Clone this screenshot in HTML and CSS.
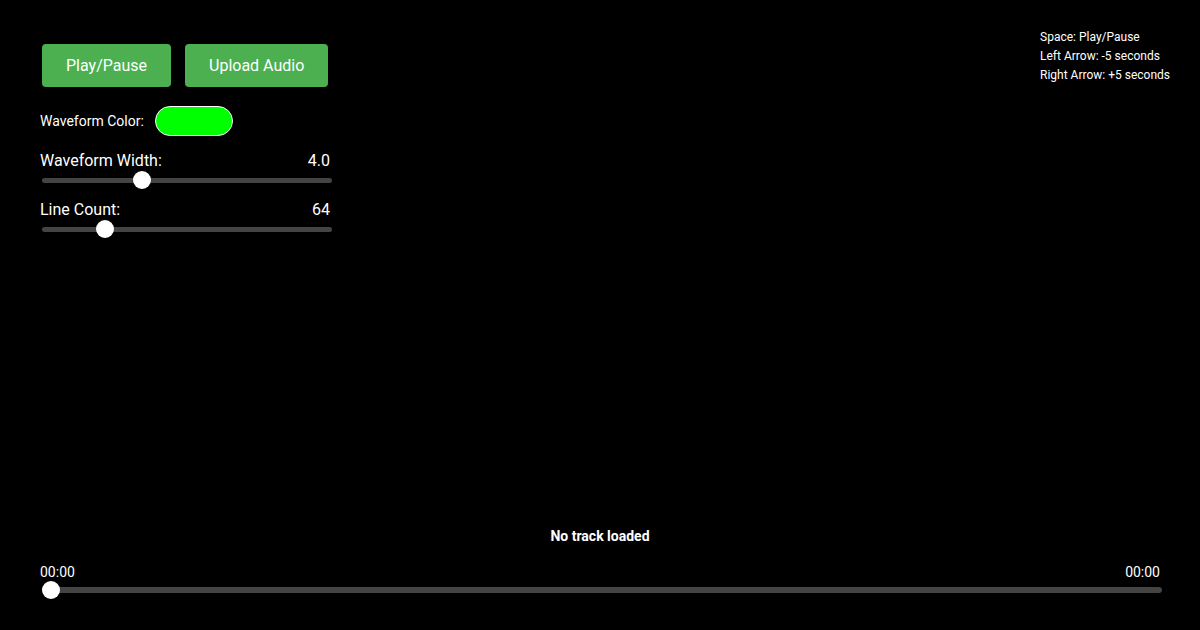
FILE: index.html
```html
<!DOCTYPE html>
<html lang="en">
<head>
<meta charset="utf-8">
<title>Waveform Player</title>
<link rel="stylesheet" href="styles.css">
</head>
<body>
<div class="page">
  <div class="top">
    <div class="panel">
      <div class="buttons">
        <button class="btn">Play/Pause</button>
        <button class="btn">Upload Audio</button>
      </div>
      <div class="color-row">
        <span class="small-label">Waveform Color:</span>
        <span class="swatch"></span>
      </div>
      <div class="control">
        <div class="control-head"><span>Waveform Width:</span><span>4.0</span></div>
        <input class="range" type="range" min="1" max="10" step="0.1" value="4">
      </div>
      <div class="control second">
        <div class="control-head"><span>Line Count:</span><span>64</span></div>
        <input class="range" type="range" min="16" max="256" step="1" value="64">
      </div>
    </div>
    <div class="shortcuts">
      <div>Space: Play/Pause</div>
      <div>Left Arrow: -5 seconds</div>
      <div>Right Arrow: +5 seconds</div>
    </div>
  </div>
  <div class="footer">
    <div class="track">No track loaded</div>
    <div class="times"><span>00:00</span><span>00:00</span></div>
    <input class="range progress" type="range" min="0" max="100" value="0">
  </div>
</div>
</body>
</html>
```
FILE: styles.css
```css
html, body {
  margin: 0;
  padding: 0;
  background: #000;
}
body {
  font-family: Roboto, "Liberation Sans", sans-serif;
  color: #fff;
}
.page {
  height: 630px;
  display: flex;
  flex-direction: column;
  box-sizing: border-box;
}
.top {
  display: flex;
  justify-content: space-between;
  align-items: flex-start;
  padding: 0 30px 0 40px;
}
.panel {
  width: 290px;
  padding-top: 44px;
}
.buttons {
  display: flex;
  gap: 14px;
  margin-left: 2px;
}
.btn {
  background: #4caf50;
  color: #fff;
  border: none;
  border-radius: 4px;
  padding: 12px 24px;
  font-family: inherit;
  font-size: 16px;
  line-height: 19px;
  margin: 0;
}
.color-row {
  display: flex;
  align-items: center;
  gap: 11px;
  margin-top: 19px;
  height: 30px;
}
.small-label {
  font-size: 14px;
}
.swatch {
  display: block;
  width: 78px;
  height: 30px;
  box-sizing: border-box;
  border: 1.5px solid #fff;
  border-radius: 15px;
  background: #00ff00;
}
.control {
  margin-top: 15px;
}
.control.second {
  margin-top: 11px;
}
.control-head {
  display: flex;
  justify-content: space-between;
  font-size: 16px;
  line-height: 19px;
}
.range {
  -webkit-appearance: none;
  appearance: none;
  display: block;
  width: 290px;
  height: 18px;
  margin: 1px 0 0 2px;
  padding: 0;
  background: transparent;
}
.range::-webkit-slider-runnable-track {
  height: 5px;
  background: #444;
  border-radius: 3px;
}
.range::-webkit-slider-thumb {
  -webkit-appearance: none;
  appearance: none;
  width: 18px;
  height: 18px;
  border-radius: 50%;
  background: #fff;
  margin-top: -6.5px;
  border: none;
}
.shortcuts {
  margin-top: 28px;
  font-size: 12px;
  line-height: 19px;
}
.footer {
  margin-top: auto;
  padding: 0 40px 31px;
}
.track {
  text-align: center;
  font-weight: bold;
  font-size: 14px;
  line-height: 17px;
  margin-bottom: 19px;
}
.times {
  display: flex;
  justify-content: space-between;
  font-size: 14px;
  line-height: 17px;
}
.range.progress {
  width: 1120px;
  margin-top: 0;
}
.range.progress::-webkit-slider-runnable-track {
  height: 6px;
}
.range.progress::-webkit-slider-thumb {
  margin-top: -6px;
}
```
